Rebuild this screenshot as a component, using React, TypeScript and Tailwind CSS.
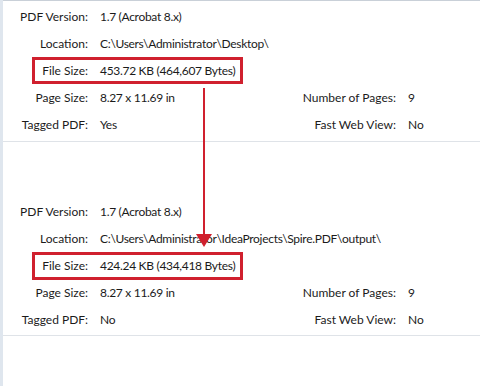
import React from 'react';

type Row = { label: string; value: string; rLabel?: string; rValue?: string };

const top: Row[] = [
  { label: 'PDF Version:', value: '1.7 (Acrobat 8.x)' },
  { label: 'Location:', value: 'C:\\Users\\Administrator\\Desktop\\' },
  { label: 'File Size:', value: '453.72 KB (464,607 Bytes)' },
  { label: 'Page Size:', value: '8.27 x 11.69 in', rLabel: 'Number of Pages:', rValue: '9' },
  { label: 'Tagged PDF:', value: 'Yes', rLabel: 'Fast Web View:', rValue: 'No' },
];

const bottom: Row[] = [
  { label: 'PDF Version:', value: '1.7 (Acrobat 8.x)' },
  { label: 'Location:', value: 'C:\\Users\\Administrator\\IdeaProjects\\Spire.PDF\\output\\' },
  { label: 'File Size:', value: '424.24 KB (434,418 Bytes)' },
  { label: 'Page Size:', value: '8.27 x 11.69 in', rLabel: 'Number of Pages:', rValue: '9' },
  { label: 'Tagged PDF:', value: 'No', rLabel: 'Fast Web View:', rValue: 'No' },
];

function PropRow({ row }: { row: Row }) {
  return (
    <div className="flex items-center h-[27px] whitespace-nowrap">
      <div className="w-[85px] text-right">{row.label}</div>
      <div className="w-[200px] pl-[12px] tracking-[-0.3px]">{row.value}</div>
      {row.rLabel && (
        <>
          <div className="w-[108px] text-right">{row.rLabel}</div>
          <div className="pl-[12px]">{row.rValue}</div>
        </>
      )}
    </div>
  );
}

export default function App() {
  return (
    <div
      className="relative w-[480px] h-[386px] bg-white text-[12px] text-[#1b1b1b] overflow-hidden flex"
      style={{ fontFamily: 'Lato, "Open Sans", sans-serif' }}
    >
      {/* left window edge */}
      <div className="w-[3px] bg-[#dfe6ee] shrink-0" />

      <div className="flex-1 flex flex-col border-t border-[#c9d0d8]">
        <div className="pt-[2px]">
          {top.map((r) => (
            <PropRow key={r.label} row={r} />
          ))}
        </div>
        <div className="mt-[3px] border-t border-[#dfe3e8]" />

        <div className="pt-[56px]">
          {bottom.map((r) => (
            <PropRow key={r.label} row={r} />
          ))}
        </div>
        <div className="mt-[2px] border-t border-[#dfe3e8]" />
      </div>

      {/* red annotation boxes */}
      <div className="absolute left-[32px] top-[57px] w-[211px] h-[27px] border-[3px] border-[#d0202e]" />
      <div className="absolute left-[32px] top-[252px] w-[211px] h-[28px] border-[3px] border-[#d0202e]" />

      {/* arrow */}
      <div className="absolute left-[203px] top-[88px] w-[2px] h-[150px] bg-[#d0202e]" />
      <svg className="absolute left-[196px] top-[232px]" width="16" height="16" viewBox="0 0 16 16">
        <polygon points="0,2 16,2 8,15" fill="#d0202e" />
      </svg>
    </div>
  );
}
